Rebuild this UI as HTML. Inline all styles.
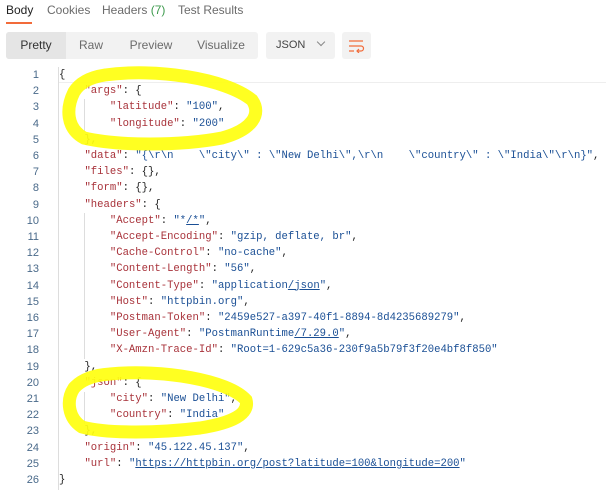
<!DOCTYPE html>
<html><head><meta charset="utf-8"><style>
body{margin:0;width:606px;height:490px;background:#fff;overflow:hidden;position:relative;font-family:"Liberation Sans",sans-serif;}
.tab{position:absolute;top:3px;font-size:12px;color:#6b6b6b;}
.btn{position:absolute;top:32px;height:27px;line-height:27px;font-size:12px;color:#6b6b6b;text-align:center;}
.code{position:absolute;left:0;top:69px;font-family:"Liberation Mono",monospace;font-size:10.6px;letter-spacing:0;}
.ln{position:absolute;left:0;width:39px;text-align:right;color:#4a6a8a;font-size:11px;font-family:"Liberation Sans",sans-serif;}
.l{position:absolute;left:59px;white-space:pre;color:#222;}
.k{color:#a8323a}.s{color:#1a4f95}.u{color:#1a4f95;text-decoration:underline}
</style></head><body>
<div class="tab" style="left:6px;color:#222">Body</div>
<div style="position:absolute;left:6px;top:22px;width:26px;height:2px;background:#f26b3a"></div>
<div class="tab" style="left:47px">Cookies</div>
<div class="tab" style="left:102px">Headers <span style="color:#3c9a4c">(7)</span></div>
<div class="tab" style="left:178px">Test Results</div>
<div style="position:absolute;left:6px;top:32px;width:252px;height:27px;background:#f2f2f2;border-radius:3px"></div>
<div class="btn" style="left:6px;width:60px;background:#e5e5e5;color:#333;border-radius:3px 0 0 3px">Pretty</div>
<div class="btn" style="left:66px;width:50px">Raw</div>
<div class="btn" style="left:120px;width:62px">Preview</div>
<div class="btn" style="left:188px;width:66px">Visualize</div>
<div class="btn" style="left:266px;width:69px;background:#f2f2f2;border-radius:3px;font-size:11px;color:#444;text-align:left;padding-left:10px;box-sizing:border-box">JSON <span style="display:inline-block;margin-left:10px;width:5px;height:5px;border-right:1px solid #888;border-bottom:1px solid #888;transform:rotate(45deg);position:relative;top:-3px"></span></div>
<div class="btn" style="left:342px;width:29px;background:#f2f2f2;border-radius:3px"></div>
<svg style="position:absolute;left:348px;top:39px" width="18" height="14"><g stroke="#f26b3a" stroke-width="1.2" fill="none"><path d="M1 2h14M1 7h12a2.5 2.5 0 0 1 0 5h-4M1 12h5"/><path d="M11 10l-2 2 2 2"/></g></svg>
<div style="position:absolute;left:58px;top:67px;width:1px;height:423px;background:#ddd"></div>
<div style="position:absolute;left:59px;top:82px;width:547px;height:1px;background:#eee"></div>
<div style="position:absolute;left:84px;top:99px;width:1px;height:32px;background:#ddd"></div>
<div style="position:absolute;left:84px;top:213px;width:1px;height:146px;background:#ddd"></div>
<div style="position:absolute;left:84px;top:392px;width:1px;height:32px;background:#ddd"></div>
<div class="code">
<div class="ln" style="top:0">1</div><div class="l" style="top:0">{</div>
<div class="ln" style="top:16.2px">2</div><div class="l" style="top:16.2px">    <span class="k">"args"</span>: {</div>
<div class="ln" style="top:32.4px">3</div><div class="l" style="top:32.4px">        <span class="k">"latitude"</span>: <span class="s">"100"</span>,</div>
<div class="ln" style="top:48.6px">4</div><div class="l" style="top:48.6px">        <span class="k">"longitude"</span>: <span class="s">"200"</span></div>
<div class="ln" style="top:64.8px">5</div><div class="l" style="top:64.8px">    },</div>
<div class="ln" style="top:81px">6</div><div class="l" style="top:81px">    <span class="k">"data"</span>: <span class="s">"{\r\n    \"city\" : \"New Delhi\",\r\n    \"country\" : \"India\"\r\n}"</span>,</div>
<div class="ln" style="top:97.2px">7</div><div class="l" style="top:97.2px">    <span class="k">"files"</span>: {},</div>
<div class="ln" style="top:113.4px">8</div><div class="l" style="top:113.4px">    <span class="k">"form"</span>: {},</div>
<div class="ln" style="top:129.6px">9</div><div class="l" style="top:129.6px">    <span class="k">"headers"</span>: {</div>
<div class="ln" style="top:145.8px">10</div><div class="l" style="top:145.8px">        <span class="k">"Accept"</span>: <span class="s">"*<u>/*</u>"</span>,</div>
<div class="ln" style="top:162px">11</div><div class="l" style="top:162px">        <span class="k">"Accept-Encoding"</span>: <span class="s">"gzip, deflate, br"</span>,</div>
<div class="ln" style="top:178.2px">12</div><div class="l" style="top:178.2px">        <span class="k">"Cache-Control"</span>: <span class="s">"no-cache"</span>,</div>
<div class="ln" style="top:194.4px">13</div><div class="l" style="top:194.4px">        <span class="k">"Content-Length"</span>: <span class="s">"56"</span>,</div>
<div class="ln" style="top:210.6px">14</div><div class="l" style="top:210.6px">        <span class="k">"Content-Type"</span>: <span class="s">"application<u>/json</u>"</span>,</div>
<div class="ln" style="top:226.8px">15</div><div class="l" style="top:226.8px">        <span class="k">"Host"</span>: <span class="s">"httpbin.org"</span>,</div>
<div class="ln" style="top:243px">16</div><div class="l" style="top:243px">        <span class="k">"Postman-Token"</span>: <span class="s">"2459e527-a397-40f1-8894-8d4235689279"</span>,</div>
<div class="ln" style="top:259.2px">17</div><div class="l" style="top:259.2px">        <span class="k">"User-Agent"</span>: <span class="s">"PostmanRuntime<u>/7.29.0</u>"</span>,</div>
<div class="ln" style="top:275.4px">18</div><div class="l" style="top:275.4px">        <span class="k">"X-Amzn-Trace-Id"</span>: <span class="s">"Root=1-629c5a36-230f9a5b79f3f20e4bf8f850"</span></div>
<div class="ln" style="top:291.6px">19</div><div class="l" style="top:291.6px">    },</div>
<div class="ln" style="top:307.8px">20</div><div class="l" style="top:307.8px">    <span class="k">"json"</span>: {</div>
<div class="ln" style="top:324px">21</div><div class="l" style="top:324px">        <span class="k">"city"</span>: <span class="s">"New Delhi"</span>,</div>
<div class="ln" style="top:340.2px">22</div><div class="l" style="top:340.2px">        <span class="k">"country"</span>: <span class="s">"India"</span></div>
<div class="ln" style="top:356.4px">23</div><div class="l" style="top:356.4px">    },</div>
<div class="ln" style="top:372.6px">24</div><div class="l" style="top:372.6px">    <span class="k">"origin"</span>: <span class="s">"45.122.45.137"</span>,</div>
<div class="ln" style="top:388.8px">25</div><div class="l" style="top:388.8px">    <span class="k">"url"</span>: <span class="s">"<span class="u">https://httpbin.org/post?latitude=100&amp;longitude=200</span>"</span></div>
<div class="ln" style="top:405px">26</div><div class="l" style="top:405px">}</div>
</div>
<svg style="position:absolute;left:0;top:0" width="606" height="490"><g fill="none" stroke="#ffff10" stroke-width="13" stroke-linecap="round" opacity="0.93">
<path d="M105 75C155 68 225 78 252 100C262 114 252 130 222 138C180 146 118 146 84 138C66 128 66 108 74 92C80 82 92 77 105 75"/>
<path d="M110 374C162 369 228 380 246 400C250 414 232 423 200 428C160 433 108 434 82 427C68 418 66 400 74 388C82 379 95 375 110 374"/>
</g></svg>
</body></html>
